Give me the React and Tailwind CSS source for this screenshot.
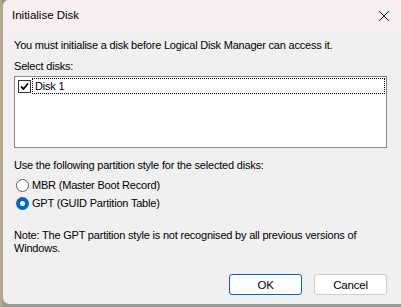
import { useState } from 'react';

const font = { fontFamily: '"Liberation Sans", Arial, sans-serif' };

const Radio = ({ checked, label, onClick }) => (
  <div className="flex items-center h-[18px] cursor-default" onClick={onClick}>
    {checked ? (
      <span className="w-[13px] h-[13px] rounded-full bg-[#0067c0] flex items-center justify-center">
        <span className="w-[5px] h-[5px] rounded-full bg-white" />
      </span>
    ) : (
      <span className="w-[13px] h-[13px] rounded-full border border-[#5d5d5d] bg-white" />
    )}
    <span className="ml-[3px] text-[11px] tracking-[-0.2px] text-black">{label}</span>
  </div>
);

const App = () => {
  const [checked, setChecked] = useState(true);
  const [style, setStyle] = useState('gpt');

  return (
    <div className="w-[401px] h-[307px] flex bg-[#9a9a9a] overflow-hidden" style={font}>
      <div className="w-[2px] bg-[#b9a888]" />
      <div className="flex-1 flex flex-col bg-[#f0f0f0] border-l border-[#a8a8a8] rounded-tl-[7px] rounded-bl-[7px] overflow-hidden h-[304px]">
        <div className="h-[31px] shrink-0 bg-[#f9eff3] flex items-center justify-between pl-[9px] pr-[11px]">
          <span className="text-[11.5px] text-black mt-[1px]">Initialise Disk</span>
          <svg width="12" height="12" viewBox="0 0 12 12" className="text-[#1a1a1a]">
            <path d="M1 1L11 11M11 1L1 11" stroke="currentColor" strokeWidth="1" />
          </svg>
        </div>
        <div className="flex flex-col pl-[11px] pr-[14px] text-[11px] tracking-[-0.2px] text-black leading-[14px]">
          <p className="mt-[7px] whitespace-nowrap">You must initialise a disk before Logical Disk Manager can access it.</p>
          <p className="mt-[7px]">Select disks:</p>
          <div className="mt-[3px] h-[72px] w-[373px] border border-[#828790] bg-white p-[1px]">
            <div className="flex items-center h-[16px] pl-[2px]">
              <span
                className="w-[13px] h-[13px] border border-[#333] bg-white flex items-center justify-center"
                onClick={() => setChecked(!checked)}
              >
                {checked && (
                  <svg width="9" height="9" viewBox="0 0 9 9">
                    <path d="M1 4.5L3.5 7L8 1.5" stroke="#000" strokeWidth="1.8" fill="none" />
                  </svg>
                )}
              </span>
              <span className="ml-[1px] flex-1 h-[16px] border border-dotted border-black flex items-center pl-[2px]">Disk 1</span>
            </div>
          </div>
          <p className="mt-[10px] whitespace-nowrap">Use the following partition style for the selected disks:</p>
          <div className="mt-[4px] pl-[2px] flex flex-col">
            <Radio label="MBR (Master Boot Record)" checked={style === 'mbr'} onClick={() => setStyle('mbr')} />
            <Radio label="GPT (GUID Partition Table)" checked={style === 'gpt'} onClick={() => setStyle('gpt')} />
          </div>
          <p className="mt-[17px] leading-[13px] whitespace-nowrap">
            Note: The GPT partition style is not recognised by all previous versions of<br />Windows.
          </p>
          <div className="mt-[19px] flex justify-end gap-[12px]">
            <button className="w-[73px] h-[21px] rounded-[3px] border border-[#0067c0] bg-[#fdfdfd] text-[11.5px]">OK</button>
            <button className="w-[73px] h-[21px] rounded-[3px] border border-[#cfcfcf] bg-[#fdfdfd] text-[11.5px]">Cancel</button>
          </div>
        </div>
      </div>
    </div>
  );
};

export default App;
